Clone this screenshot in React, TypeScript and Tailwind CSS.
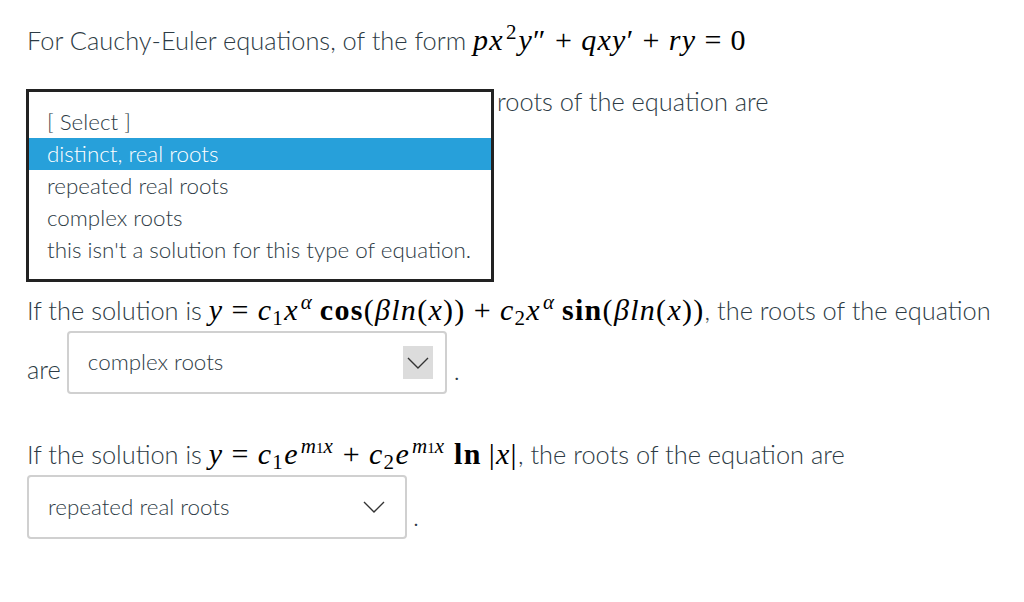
const serif = "font-['Liberation_Serif','DejaVu_Serif',serif]"

function V({ children }: { children: React.ReactNode }) {
  return <i className="italic">{children}</i>
}

function Op({ children }: { children: React.ReactNode }) {
  return <span className="mx-[8px] not-italic">{children}</span>
}

function Sup({ children }: { children: React.ReactNode }) {
  return <span className="text-[21px] tracking-normal relative -top-[11px] ml-[2px] mr-[2px]">{children}</span>
}

function Sub({ children }: { children: React.ReactNode }) {
  return <span className="text-[21px] relative top-[5px]">{children}</span>
}

function Math({ children }: { children: React.ReactNode }) {
  return (
    <span className={`${serif} text-[30px] leading-[0] tracking-[1.3px] text-black whitespace-nowrap`}>
      {children}
    </span>
  )
}

function Chevron() {
  return (
    <svg width="22" height="12" viewBox="0 0 22 12" fill="none">
      <polyline points="1,1 11,11 21,1" stroke="#333" strokeWidth="1.4" />
    </svg>
  )
}

const options = [
  "distinct, real roots",
  "repeated real roots",
  "complex roots",
  "this isn't a solution for this type of equation.",
]

export default function App() {
  return (
    <div className="min-h-[602px] w-[1024px] bg-white pl-[27px] pt-[22px] font-['Lato','Noto_Sans',sans-serif] font-light text-[25.4px] text-[#2d3b45]">
      {/* intro line */}
      <p className="leading-[36px] h-[36px] whitespace-nowrap">
        For Cauchy-Euler equations, of the form{" "}
        <Math>
          <V>px</V>
          <Sup>2</Sup>
          <V>y</V>″<Op>+</Op>
          <V>qxy</V>′<Op>+</Op>
          <V>ry</V>
          <Op>=</Op>0
        </Math>
      </p>

      {/* open listbox */}
      <div className="mt-[31px] flex items-start">
        <div className="-ml-[1px] w-[468px] h-[193px] border-[3px] border-[#222] bg-white pt-[14px]">
          <div className="h-[32px] pl-[18px] text-[22.4px] leading-[32px]">[ Select ]</div>
          {options.map((o, i) => (
            <div
              key={o}
              className={
                i === 0
                  ? "h-[32px] pl-[18px] text-[22.4px] leading-[32px] bg-[#27a0da] text-white"
                  : "h-[32px] pl-[18px] text-[22.4px] leading-[32px] whitespace-nowrap"
              }
            >
              {o}
            </div>
          ))}
        </div>
        <span className="ml-[3px] -mt-[2px] leading-[28px] whitespace-nowrap">roots of the equation are</span>
      </div>

      {/* complex roots */}
      <p className="mt-[10px] leading-[36px] whitespace-nowrap">
        If the solution is{" "}
        <Math>
          <V>y</V>
          <Op>=</Op>
          <V>c</V>
          <Sub>1</Sub>
          <V>x</V>
          <Sup>
            <V>α</V>
          </Sup>
          <span className="ml-[6px] font-bold">cos</span>(<V>β</V>
          <V>ln</V>(<V>x</V>))<Op>+</Op>
          <V>c</V>
          <Sub>2</Sub>
          <V>x</V>
          <Sup>
            <V>α</V>
          </Sup>
          <span className="ml-[6px] font-bold">sin</span>(<V>β</V>
          <V>ln</V>(<V>x</V>))
        </Math>
        , the roots of the equation
      </p>
      <div className="mt-[3px] flex items-center">
        <span className="leading-[36px] mt-[12px]">are</span>
        <div className="ml-[6px] w-[380px] h-[63px] rounded-[4px] border-2 border-[#d0d0d0] bg-white flex items-center justify-between pl-[19px] pr-[12px]">
          <span className="text-[22.4px] -mt-[1px]">complex roots</span>
          <div className="w-[30px] h-[33px] bg-[#dcdcdc] flex items-center justify-center">
            <Chevron />
          </div>
        </div>
        <span className="ml-[7px] mt-[16px]">.</span>
      </div>

      {/* repeated roots */}
      <p className="mt-[42px] leading-[36px] whitespace-nowrap">
        If the solution is{" "}
        <Math>
          <V>y</V>
          <Op>=</Op>
          <V>c</V>
          <Sub>1</Sub>
          <V>e</V>
          <Sup>
            <V>m</V>
            <span className="text-[15px]">1</span>
            <V>x</V>
          </Sup>
          <Op>+</Op>
          <V>c</V>
          <Sub>2</Sub>
          <V>e</V>
          <Sup>
            <V>m</V>
            <span className="text-[15px]">1</span>
            <V>x</V>
          </Sup>
          <span className="ml-[8px] font-bold">ln</span>
          <span className="ml-[7px]">|</span>
          <V>x</V>|
        </Math>
        , the roots of the equation are
      </p>
      <div className="mt-[3px] flex items-center">
        <div className="w-[380px] h-[64px] rounded-[4px] border-2 border-[#d0d0d0] bg-white flex items-center justify-between pl-[19px] pr-[20px]">
          <span className="text-[22.4px]">repeated real roots</span>
          <Chevron />
        </div>
        <span className="ml-[6px] mt-[18px]">.</span>
      </div>
    </div>
  )
}
